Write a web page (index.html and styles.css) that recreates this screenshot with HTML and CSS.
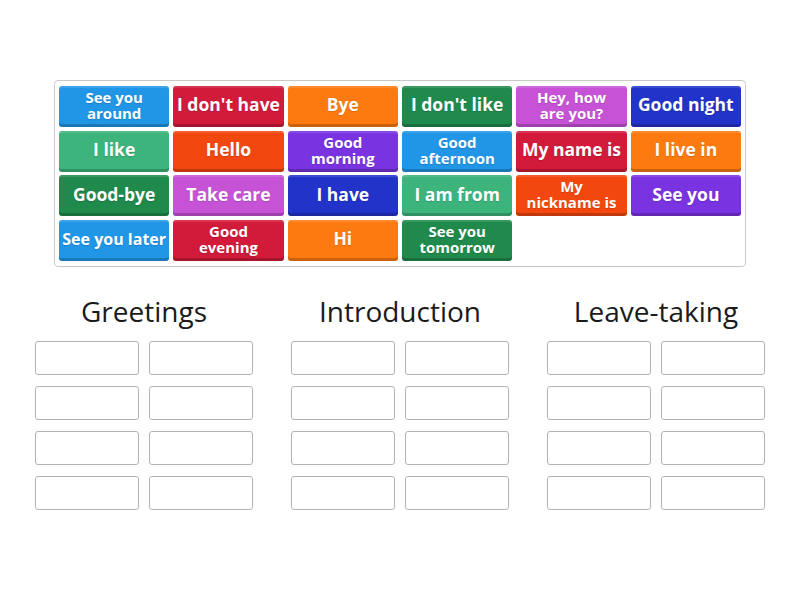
FILE: index.html
```html
<!DOCTYPE html>
<html>
<head>
<meta charset="utf-8">
<link rel="stylesheet" href="styles.css">
</head>
<body>
<div class="bank">
  <div class="tile c-blue two">See you around</div>
  <div class="tile c-red">I don't have</div>
  <div class="tile c-orange">Bye</div>
  <div class="tile c-dkgreen">I don't like</div>
  <div class="tile c-pink two">Hey, how are you?</div>
  <div class="tile c-indigo">Good night</div>
  <div class="tile c-ltgreen">I like</div>
  <div class="tile c-orangered">Hello</div>
  <div class="tile c-purple two">Good morning</div>
  <div class="tile c-blue two">Good afternoon</div>
  <div class="tile c-red">My name is</div>
  <div class="tile c-orange">I live in</div>
  <div class="tile c-dkgreen">Good-bye</div>
  <div class="tile c-pink">Take care</div>
  <div class="tile c-indigo">I have</div>
  <div class="tile c-ltgreen">I am from</div>
  <div class="tile c-orangered two">My nickname is</div>
  <div class="tile c-purple">See you</div>
  <div class="tile c-blue fit">See you later</div>
  <div class="tile c-red two">Good evening</div>
  <div class="tile c-orange">Hi</div>
  <div class="tile c-dkgreen two">See you tomorrow</div>
</div>
<div class="groups">
  <div class="group">
    <div class="title">Greetings</div>
    <div class="slots">
      <div class="slot"></div><div class="slot"></div>
      <div class="slot"></div><div class="slot"></div>
      <div class="slot"></div><div class="slot"></div>
      <div class="slot"></div><div class="slot"></div>
    </div>
  </div>
  <div class="group">
    <div class="title">Introduction</div>
    <div class="slots">
      <div class="slot"></div><div class="slot"></div>
      <div class="slot"></div><div class="slot"></div>
      <div class="slot"></div><div class="slot"></div>
      <div class="slot"></div><div class="slot"></div>
    </div>
  </div>
  <div class="group">
    <div class="title">Leave-taking</div>
    <div class="slots">
      <div class="slot"></div><div class="slot"></div>
      <div class="slot"></div><div class="slot"></div>
      <div class="slot"></div><div class="slot"></div>
      <div class="slot"></div><div class="slot"></div>
    </div>
  </div>
</div>
</body>
</html>
```

FILE: styles.css
```css
html, body {
  margin: 0;
  padding: 0;
  background: #ffffff;
  font-family: "Open Sans", "Liberation Sans", sans-serif;
}

.bank {
  box-sizing: border-box;
  width: 692px;
  height: 187px;
  margin: 80px auto 0;
  padding: 5px 4px 4px 4px;
  border: 1px solid #c8c8c8;
  border-radius: 4px;
  display: grid;
  grid-template-columns: repeat(6, 1fr);
  grid-auto-rows: 41px;
  column-gap: 4px;
  row-gap: 3.7px;
  align-content: start;
}

.tile {
  box-sizing: border-box;
  border-radius: 3px;
  color: #ffffff;
  font-weight: 700;
  font-size: 17.5px;
  line-height: 1;
  display: flex;
  align-items: center;
  justify-content: center;
  text-align: center;
  padding: 0 2px 3px;
  box-shadow: inset 0 -3px 0 rgba(0, 0, 0, 0.2), inset 0 2px 0 rgba(255, 255, 255, 0.12);
  text-shadow: 0 1px 1px rgba(0, 0, 0, 0.15);
  white-space: nowrap;
}

.tile.two {
  font-size: 15px;
  line-height: 16px;
  white-space: normal;
  padding: 0 8px 3px;
}

.tile.fit {
  font-size: 16px;
}

.c-blue { background: #2196e6; }
.c-red { background: #d21a3a; }
.c-orange { background: #fd7a10; }
.c-dkgreen { background: #1f8a4c; }
.c-pink { background: #c652d6; }
.c-indigo { background: #2233c9; }
.c-ltgreen { background: #3cb47c; }
.c-orangered { background: #f2470f; }
.c-purple { background: #7933e0; }

.groups {
  display: flex;
  justify-content: center;
  gap: 38px;
  margin-top: 25px;
}

.group {
  width: 218px;
  display: flex;
  flex-direction: column;
  align-items: center;
}

.title {
  font-size: 28px;
  line-height: 38px;
  color: #1a1a1a;
  height: 38px;
  margin-bottom: 11px;
}

.slots {
  display: grid;
  grid-template-columns: 104px 104px;
  column-gap: 10px;
  row-gap: 11px;
}

.slot {
  box-sizing: border-box;
  height: 34px;
  border: 1px solid #b3b3b3;
  border-radius: 3px;
  background: #ffffff;
}
```
